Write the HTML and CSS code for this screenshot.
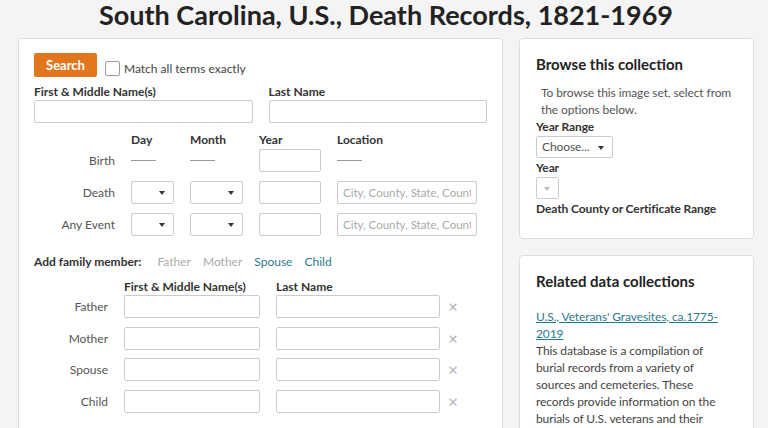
FILE: index.html
```html
<!DOCTYPE html>
<html lang="en">
<head>
<meta charset="UTF-8">
<meta name="viewport" content="width=device-width, initial-scale=1.0">
<title>South Carolina, U.S., Death Records, 1821-1969</title>
<link rel="stylesheet" href="styles.css">
</head>
<body>

<h1 class="page-title">South Carolina, U.S., Death Records, 1821-1969</h1>

<div class="layout">
    <form class="panel search-form" onsubmit="return false">
        <div class="search-bar">
            <button class="btn-search" type="submit">Search</button>
            <label class="exact"><span class="checkbox"></span>Match all terms exactly</label>
        </div>

        <div class="name-row">
            <div class="field">
                <label>First &amp; Middle Name(s)</label>
                <input type="text" class="text-input">
            </div>
            <div class="field">
                <label>Last Name</label>
                <input type="text" class="text-input">
            </div>
        </div>

        <div class="events">
            <span></span>
            <span class="col-head">Day</span>
            <span class="col-head">Month</span>
            <span class="col-head">Year</span>
            <span class="col-head">Location</span>

            <span class="row-label">Birth</span>
            <span class="dash"></span>
            <span class="dash"></span>
            <input type="text" class="text-input year">
            <span class="dash"></span>

            <span class="row-label">Death</span>
            <div class="select day"><span class="caret"></span></div>
            <div class="select month"><span class="caret"></span></div>
            <input type="text" class="text-input year">
            <input type="text" class="text-input location" placeholder="City, County, State, Country">

            <span class="row-label">Any Event</span>
            <div class="select day"><span class="caret"></span></div>
            <div class="select month"><span class="caret"></span></div>
            <input type="text" class="text-input year">
            <input type="text" class="text-input location" placeholder="City, County, State, Country">
        </div>

        <div class="family-add">
            <strong>Add family member:</strong>
            <span class="rel off first">Father</span>
            <span class="rel off">Mother</span>
            <a class="rel">Spouse</a>
            <a class="rel">Child</a>
        </div>

        <div class="family">
            <span></span>
            <span class="col-head">First &amp; Middle Name(s)</span>
            <span class="col-head">Last Name</span>
            <span></span>

            <span class="row-label">Father</span>
            <input type="text" class="text-input">
            <input type="text" class="text-input">
            <span class="remove">&times;</span>

            <span class="row-label">Mother</span>
            <input type="text" class="text-input">
            <input type="text" class="text-input">
            <span class="remove">&times;</span>

            <span class="row-label">Spouse</span>
            <input type="text" class="text-input">
            <input type="text" class="text-input">
            <span class="remove">&times;</span>

            <span class="row-label">Child</span>
            <input type="text" class="text-input">
            <input type="text" class="text-input">
            <span class="remove">&times;</span>
        </div>
    </form>

    <div class="sidebar">
        <div class="panel side-box">
            <h3>Browse this collection</h3>
            <p class="intro">To browse this image set, select from the options below.</p>
            <div class="browse-label">Year Range</div>
            <div class="select choose">Choose...<span class="caret"></span></div>
            <div class="browse-label">Year</div>
            <div class="select empty"><span class="caret light"></span></div>
            <div class="browse-label">Death County or Certificate Range</div>
        </div>

        <div class="panel side-box">
            <h3>Related data collections</h3>
            <a class="related-link" href="#">U.S., Veterans' Gravesites, ca.1775-2019</a>
            <p class="related-text">This database is a compilation of burial records from a variety of sources and cemeteries. These records provide information on the burials of U.S. veterans and their dependents who are buried in national cemeteries.</p>
        </div>
    </div>
</div>

</body>
</html>
```

FILE: styles.css
```css
body {
    font-family: 'Lato', 'Liberation Sans', sans-serif;
    background-color: #f4f4f4;
    color: #333;
    margin: 0;
    padding: 0 14px 0 18px;
    font-size: 12px;
    overflow: hidden;
    height: 428px;
}
.page-title {
    margin: 0;
    height: 38px;
    line-height: 29px;
    text-align: center;
    font-size: 27px;
    font-weight: 700;
    color: #222;
}
.layout {
    display: flex;
    gap: 16px;
    align-items: flex-start;
}
.panel {
    background-color: #fff;
    border: 1px solid #ddd;
    border-radius: 4px;
    box-sizing: border-box;
}
.search-form {
    width: 485px;
    padding: 14px 15px 20px;
}
.search-bar {
    display: flex;
    align-items: center;
    gap: 8px;
}
.btn-search {
    background-color: #e2761f;
    color: #fff;
    border: none;
    border-radius: 2px;
    font-family: inherit;
    font-size: 13px;
    font-weight: 700;
    height: 24px;
    width: 63px;
    padding: 0;
}
.exact {
    display: flex;
    align-items: center;
    gap: 4px;
    color: #444;
    margin-top: 6px;
}
.checkbox {
    width: 13px;
    height: 13px;
    border: 1px solid #999;
    border-radius: 2px;
}
.name-row {
    display: flex;
    gap: 16px;
    margin-top: 6px;
}
.field {
    flex: 1;
    display: flex;
    flex-direction: column;
}
.field label,
.col-head,
.family-add strong {
    font-weight: 700;
    color: #333;
}
.field label {
    line-height: 17px;
}
.text-input {
    height: 23px;
    border: 1px solid #ccc;
    border-radius: 2px;
    box-sizing: border-box;
    font-family: inherit;
    font-size: 11.5px;
    padding: 0 5px;
    width: 100%;
}
.text-input::placeholder {
    color: #aaa;
}

/* birth / death / any event grid */
.events {
    display: grid;
    grid-template-columns: 97px 59px 69px 78px 140px;
    grid-template-rows: 26px 32px 32px 32px;
    align-items: start;
}
.col-head {
    line-height: 17px;
}
.events .col-head {
    align-self: end;
    margin-bottom: 1px;
}
.row-label {
    text-align: right;
    padding-right: 16px;
    color: #555;
    line-height: 23px;
}
.dash {
    display: block;
    width: 25px;
    height: 1px;
    margin-top: 11px;
    background-color: #999;
}
.events .year {
    width: 62px;
}
.select {
    position: relative;
    height: 23px;
    border: 1px solid #ccc;
    border-radius: 2px;
    box-sizing: border-box;
    background-color: #fff;
}
.select.day {
    width: 43px;
}
.select.month {
    width: 53px;
}
.caret {
    position: absolute;
    right: 8px;
    top: 9px;
    border-left: 3px solid transparent;
    border-right: 3px solid transparent;
    border-top: 4px solid #333;
}
.caret.light {
    border-top-color: #bbb;
}

.family-add {
    display: flex;
    gap: 12px;
    margin-top: 9px;
    line-height: 16px;
}
.rel {
    color: #2b7a8c;
}
.rel.off {
    color: #aaa;
}
.rel.first {
    margin-left: 4px;
}

/* family member rows */
.family {
    display: grid;
    grid-template-columns: 74px 136px 164px 20px;
    grid-template-rows: 17px repeat(4, 31.7px);
    column-gap: 16px;
    align-items: start;
    margin-top: 8px;
}
.family .row-label {
    padding-right: 0;
}
.remove {
    color: #b5b5b5;
    font-size: 17px;
    line-height: 23px;
    margin-left: -8px;
}

.sidebar {
    width: 235px;
    display: flex;
    flex-direction: column;
    gap: 16px;
}
.side-box {
    padding: 16px 10px 20px 16px;
    letter-spacing: -0.1px;
}
.side-box h3 {
    margin: 0 0 11px;
    font-size: 15px;
    line-height: 18px;
    color: #222;
    letter-spacing: 0;
}
.intro {
    margin: 0 0 0 5px;
    line-height: 17px;
    color: #555;
}
.browse-label {
    font-weight: 700;
    line-height: 17px;
    margin-bottom: 1px;
}
.select.choose {
    width: 77px;
    height: 22px;
    line-height: 20px;
    padding-left: 5px;
    color: #555;
    margin-bottom: 1px;
}
.select.empty {
    width: 23px;
    height: 22px;
    margin-bottom: 1px;
}
.related-link {
    display: block;
    margin-top: 18px;
    color: #2b7a8c;
    line-height: 17px;
}
.related-text {
    margin: 0;
    max-width: 194px;
    line-height: 17px;
    color: #444;
}
```
